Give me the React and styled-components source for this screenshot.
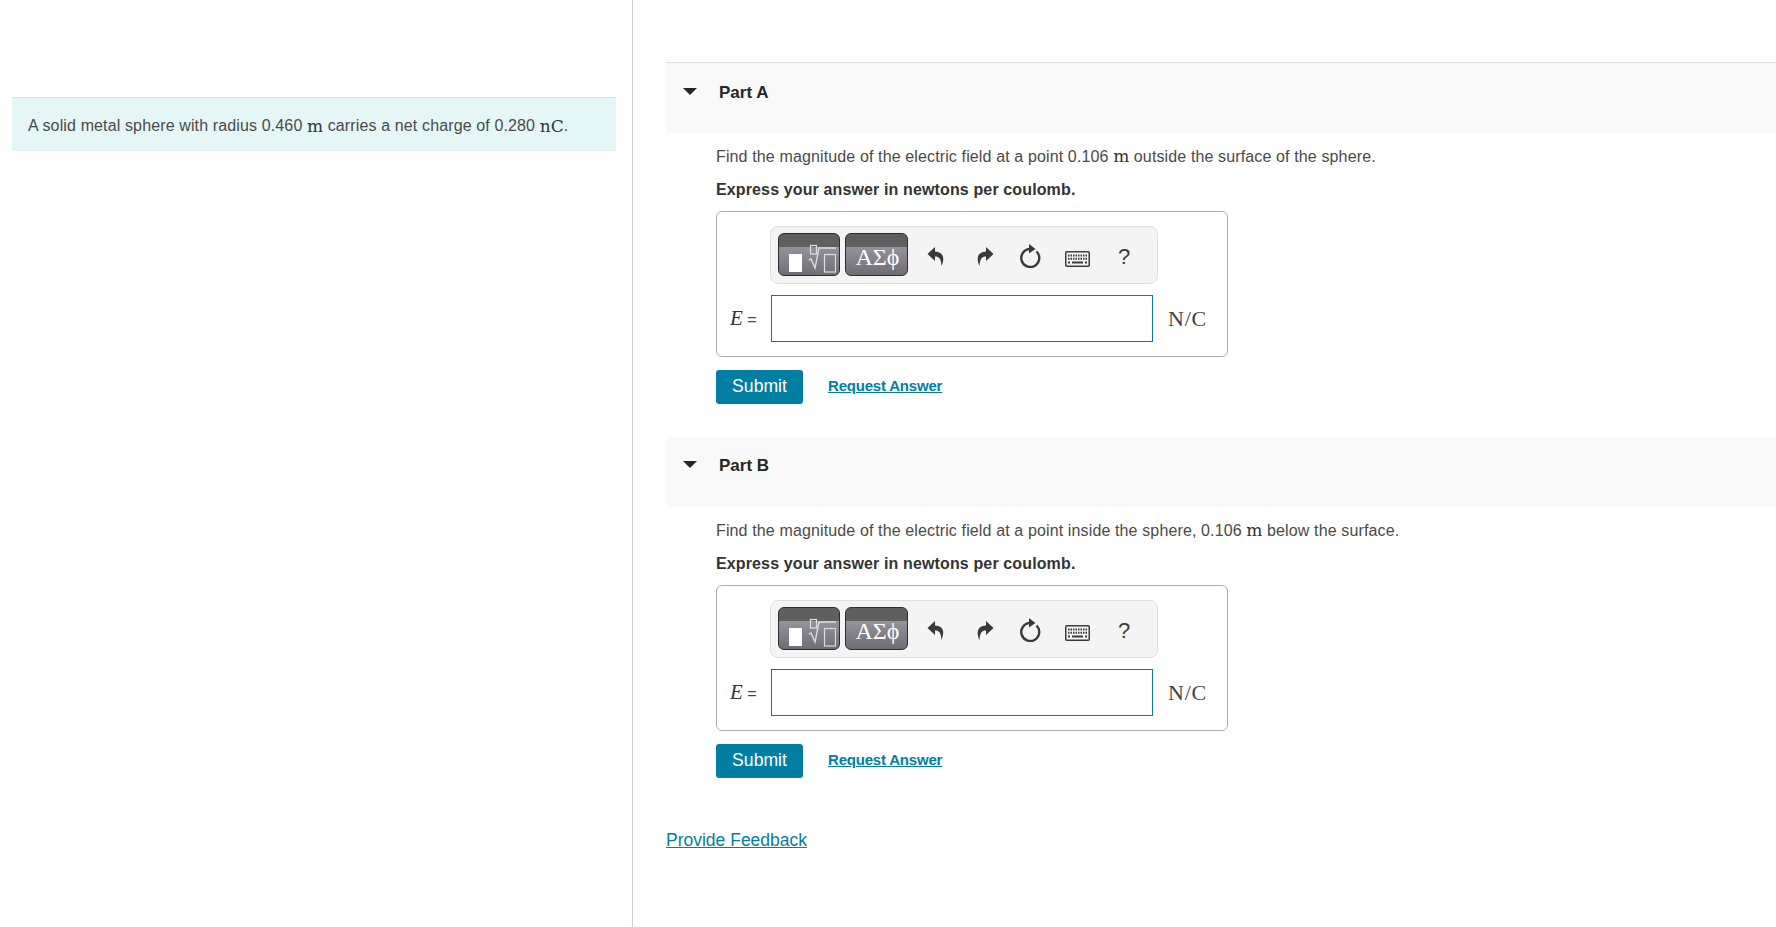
import React from "react";
import styled, { createGlobalStyle } from "styled-components";

const GlobalStyle = createGlobalStyle`
  html, body {
    margin: 0;
    background: #fff;
    font-family: "Liberation Sans", Arial, sans-serif;
    color: #333;
  }
`;

const Page = styled.div`
  display: grid;
  grid-template-columns: 633px 1fr;
  min-height: 927px;
  overflow: hidden;
`;

const Sidebar = styled.aside`
  border-right: 1px solid #c5d3e2;
  padding: 97px 16px 0 12px;
`;

const Intro = styled.div`
  box-sizing: border-box;
  height: 54px;
  padding: 2px 16px 0;
  display: flex;
  align-items: center;
  background: #e5f6f7;
  border-top: 1px solid #d9e2e3;
  font-size: 16px;
  letter-spacing: 0.13px;
  color: #4a4a4a;
  white-space: pre;
`;

const Math = styled.span`
  font-family: "DejaVu Serif", "Liberation Serif", serif;
  font-size: 17px;
  letter-spacing: 0;
  color: #333;
`;

const MathVar = styled.i`
  font-family: "Liberation Serif", "DejaVu Serif", serif;
  font-size: 21px;
  color: #333;
`;

const Main = styled.main`
  padding: 62px 0 0 33px;
`;

const PartHeader = styled.div`
  height: ${(p) => (p.$ruled ? 71 : 70)}px;
  box-sizing: border-box;
  display: flex;
  padding: ${(p) => (p.$ruled ? 19 : 18)}px 0 0 17px;
  gap: 22px;
  background: #f9f9f9;
  border-top: ${(p) => (p.$ruled ? "1px solid #e0e0e0" : "none")};
  margin-bottom: 12px;
`;

const Caret = styled.span`
  width: 0;
  height: 0;
  margin-top: 6px;
  border-left: 7px solid transparent;
  border-right: 7px solid transparent;
  border-top: 7px solid #262626;
`;

const PartTitle = styled.h2`
  margin: 0;
  font-size: 17px;
  font-weight: 700;
  line-height: 22px;
  color: #262626;
`;

const PartBody = styled.section`
  padding-left: 50px;
  margin-bottom: 33px;
`;

const Question = styled.p`
  margin: 0 0 10px;
  height: 23px;
  line-height: 23px;
  font-size: 16px;
  letter-spacing: 0.13px;
  color: #4a4a4a;
  white-space: pre;
`;

const Instruction = styled.p`
  margin: 0 0 10px;
  height: 23px;
  line-height: 23px;
  font-size: 16px;
  font-weight: 700;
  letter-spacing: 0.13px;
  color: #333;
`;

const AnswerBox = styled.div`
  box-sizing: border-box;
  width: 512px;
  height: 146px;
  border: 1px solid #aeaeae;
  border-radius: 6px;
  padding: 14px 0 0 53px;
`;

const Toolbar = styled.div`
  box-sizing: border-box;
  width: 388px;
  height: 58px;
  display: flex;
  align-items: flex-start;
  padding: 6px 0 0 7px;
  background: #f4f4f4;
  border: 1px solid #e0e0e0;
  border-radius: 8px;
`;

const TemplateButton = styled.div`
  box-sizing: border-box;
  width: ${(p) => p.$width}px;
  height: 43px;
  margin-right: 5px;
  border: 1px solid #2e2e2e;
  border-radius: 6px;
  display: flex;
  align-items: center;
  justify-content: center;
  padding: 5px 0 0 ${(p) => p.$indent || 0}px;
  background: linear-gradient(#5f5f5f 0 13px, #94929b 13px, #6f6e75 100%);
  color: #fff;
  font-family: "Liberation Serif", "DejaVu Serif", serif;
  font-size: 24px;
`;

const ToolIcon = styled.div`
  width: ${(p) => p.$width}px;
  height: 24px;
  margin-top: ${(p) => p.$top}px;
  display: flex;
  justify-content: center;
  color: #3a3a3a;
  font-size: 22px;
`;

const InputRow = styled.div`
  display: flex;
  align-items: center;
  margin: 11px 0 0 -40px;
`;

const Variable = styled.span`
  width: 41px;
  font-size: 16px;
  color: #444;
  white-space: pre;
`;

const Field = styled.div`
  box-sizing: border-box;
  width: 382px;
  height: 47px;
  border: 1px solid #007fa3;
  background: #fff;
`;

const Unit = styled.span`
  margin-left: 15px;
  font-family: "Liberation Serif", "DejaVu Serif", serif;
  font-size: 22px;
  letter-spacing: 0.8px;
  color: #444;
`;

const Actions = styled.div`
  display: flex;
  align-items: center;
  gap: 25px;
  margin-top: 13px;
`;

const Submit = styled.button`
  width: 87px;
  height: 34px;
  padding: 0 0 2px;
  border: none;
  border-radius: 3px;
  background: #007fa3;
  color: #fff;
  font-family: inherit;
  font-size: 17.6px;
`;

const RequestLink = styled.a`
  padding-bottom: 4px;
  font-size: 15px;
  font-weight: 700;
  letter-spacing: -0.2px;
  color: #007fa3;
  text-decoration: underline;
`;

const Feedback = styled.a`
  display: block;
  width: fit-content;
  margin-top: 52px;
  font-size: 17.5px;
  color: #007fa3;
  text-decoration: underline;
`;

const UndoIcon = ({ flip }) => (
  <svg width="18" height="21" viewBox="0 0 18 21" style={flip ? { transform: "scaleX(-1)" } : undefined}>
    <path
      fill="currentColor"
      d="M8 1 0.5 8 8 15V10.5C12 10.5 14 12.5 14.5 20 17.5 13.5 17.5 6 8 5.5Z"
    />
  </svg>
);

const ResetIcon = () => (
  <svg width="22" height="24" viewBox="0 0 22 24" fill="none">
    <path stroke="currentColor" strokeWidth="2.4" d="M11 5A9 9 0 1 0 17.5 7.5" />
    <path fill="currentColor" d="M10 0 16.5 5 10 9.5Z" />
  </svg>
);

const KeyboardIcon = () => (
  <svg width="25" height="16" viewBox="0 0 25 16" fill="none">
    <rect x="0.75" y="0.75" width="23.5" height="14.5" rx="1" stroke="currentColor" strokeWidth="1.5" />
    <path stroke="currentColor" strokeWidth="2" strokeDasharray="1.5 1" d="M3 4.5H22M3 7.8H22" />
    <path stroke="currentColor" strokeWidth="2" d="M3 11.5H5M7 11.5H18M20 11.5H22" />
  </svg>
);

const RootIcon = () => (
  <svg width="54" height="32" viewBox="0 0 54 32" fill="none">
    <rect x="7" y="13" width="13" height="18" fill="#fff" />
    <rect x="28.5" y="4.5" width="6" height="8.5" stroke="#ddd" strokeWidth="1.2" />
    <path d="M27 19 29 18 33 27 37 7H54" stroke="#ddd" strokeWidth="1.4" />
    <rect x="42.5" y="13.5" width="11" height="17.5" stroke="#ddd" strokeWidth="1.2" />
  </svg>
);

const Part = ({ title, ruled, question }) => (
  <>
    <PartHeader $ruled={ruled}>
      <Caret />
      <PartTitle>{title}</PartTitle>
    </PartHeader>
    <PartBody>
      <Question>{question}</Question>
      <Instruction>Express your answer in newtons per coulomb.</Instruction>
      <AnswerBox>
        <Toolbar>
          <TemplateButton $width={62}>
            <RootIcon />
          </TemplateButton>
          <TemplateButton $width={63} $indent={2}>
            ΑΣϕ
          </TemplateButton>
          <ToolIcon $width={46} $top={13}>
            <UndoIcon />
          </ToolIcon>
          <ToolIcon $width={51} $top={13}>
            <UndoIcon flip />
          </ToolIcon>
          <ToolIcon $width={40} $top={11}>
            <ResetIcon />
          </ToolIcon>
          <ToolIcon $width={54} $top={18}>
            <KeyboardIcon />
          </ToolIcon>
          <ToolIcon $width={40} $top={11}>
            ?
          </ToolIcon>
        </Toolbar>
        <InputRow>
          <Variable>
            <MathVar>E</MathVar>
            {" ="}
          </Variable>
          <Field />
          <Unit>N/C</Unit>
        </InputRow>
      </AnswerBox>
      <Actions>
        <Submit>Submit</Submit>
        <RequestLink href="#">Request Answer</RequestLink>
      </Actions>
    </PartBody>
  </>
);

export default function App() {
  return (
    <Page>
      <GlobalStyle />
      <Sidebar>
        <Intro>
          A solid metal sphere with radius 0.460 <Math>m</Math> carries a net charge of 0.280 <Math>nC</Math>.
        </Intro>
      </Sidebar>
      <Main>
        <Part
          title="Part A"
          ruled
          question={
            <>
              Find the magnitude of the electric field at a point 0.106 <Math>m</Math> outside the surface of the sphere.
            </>
          }
        />
        <Part
          title="Part B"
          question={
            <>
              Find the magnitude of the electric field at a point inside the sphere, 0.106 <Math>m</Math> below the surface.
            </>
          }
        />
        <Feedback href="#">Provide Feedback</Feedback>
      </Main>
    </Page>
  );
}
